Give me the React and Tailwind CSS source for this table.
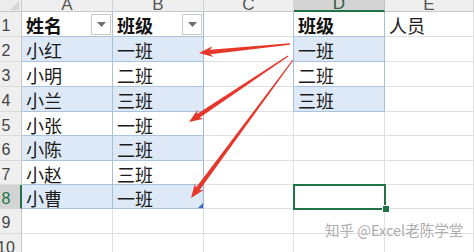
import React from 'react';

const names = ['小红', '小明', '小兰', '小张', '小陈', '小赵', '小曹'];
const classes = ['一班', '二班', '三班', '一班', '二班', '三班', '一班'];
const dList = ['一班', '二班', '三班'];
const rowH = ['h-[25px]', 'h-[25px]', 'h-[25px]', 'h-[25px]', 'h-[24px]', 'h-[25px]', 'h-[24px]', 'h-[24px]', 'h-[25px]', 'h-[25px]'];

function arrowPts(x1, y1, x2, y2, w1, w2, hl, hw) {
  const dx = x2 - x1, dy = y2 - y1, L = Math.hypot(dx, dy);
  const ux = dx / L, uy = dy / L, nx = -uy, ny = ux;
  const bx = x2 - ux * hl, by = y2 - uy * hl;
  const nb = x2 - ux * (hl * 0.8), nby = y2 - uy * (hl * 0.8);
  const p = [
    [x1 + (nx * w1) / 2, y1 + (ny * w1) / 2],
    [nb + (nx * w2) / 2, nby + (ny * w2) / 2],
    [bx + (nx * hw) / 2, by + (ny * hw) / 2],
    [x2, y2],
    [bx - (nx * hw) / 2, by - (ny * hw) / 2],
    [nb - (nx * w2) / 2, nby - (ny * w2) / 2],
    [x1 - (nx * w1) / 2, y1 - (ny * w1) / 2],
  ];
  return p.map((q) => q[0].toFixed(2) + ',' + q[1].toFixed(2)).join(' ');
}

function Dropdown() {
  return (
    <div className="absolute right-[1px] top-[2px] w-[20px] h-[21px] bg-white border border-[#c9c9c9] flex items-center justify-center">
      <svg width="9" height="5" viewBox="0 0 9 5">
        <path d="M0 0H9L4.5 5Z" fill="#6f6f6f" />
      </svg>
    </div>
  );
}

function Txt({ children, bold }) {
  return (
    <span
      className={
        bold
          ? "block pl-[4px] pt-[2px] text-[18px] leading-[22px] font-bold text-[#111] whitespace-nowrap font-['Noto_Sans_CJK_SC','Noto_Sans',sans-serif]"
          : "block pl-[4px] pt-[2px] text-[18px] leading-[22px] text-[#1a1a1a] whitespace-nowrap font-['Noto_Sans_CJK_SC','Noto_Sans',sans-serif]"
      }
    >
      {children}
    </span>
  );
}

export default function App() {
  const rows = [];
  for (let r = 1; r <= 10; r++) {
    const inTable = r <= 8;
    const blue = inTable && r % 2 === 0;
    const dTable = r <= 4;
    const dBlue = dTable && r % 2 === 0;
    const sel = r === 8;
    rows.push(
      <div key={r} className={'flex ' + rowH[r - 1]}>
        <div
          className={
            sel
              ? 'w-[22px] shrink-0 bg-[#d3d3d3] border-r-2 border-r-[#217346] border-b border-b-[#d4d4d4] overflow-hidden relative'
              : 'w-[22px] shrink-0 bg-[#efefef] border-r border-r-[#c8c8c8] border-b border-b-[#dadada] overflow-hidden relative'
          }
        >
          <span
            className={
              sel
                ? "absolute left-[-9px] w-[30px] top-0 text-center pt-[3px] text-[16px] leading-[22px] text-[#217346] font-['Liberation_Sans',Arial,sans-serif]"
                : "absolute left-[-9px] w-[30px] top-0 text-center pt-[3px] text-[16px] leading-[22px] text-[#444] font-['Liberation_Sans',Arial,sans-serif]"
            }
          >
            {r}
          </span>
        </div>
        {/* A */}
        <div
          className={
            inTable
              ? (blue ? 'bg-[#dde9f6] ' : 'bg-white ') + 'w-[91px] shrink-0 relative border-r border-b border-r-[#a9c0d9] border-b-[#aac3de]'
              : 'bg-white w-[91px] shrink-0 relative border-r border-b border-r-[#e0e0e0] border-b-[#e0e0e0]'
          }
        >
          {r === 1 && <Txt bold>姓名</Txt>}
          {r === 1 && <Dropdown />}
          {r >= 2 && r <= 8 && <Txt>{names[r - 2]}</Txt>}
        </div>
        {/* B */}
        <div
          className={
            inTable
              ? (blue ? 'bg-[#dde9f6] ' : 'bg-white ') + 'w-[91px] shrink-0 relative border-r border-b border-r-[#9fb7d1] border-b-[#aac3de]'
              : 'bg-white w-[91px] shrink-0 relative border-r border-b border-r-[#e0e0e0] border-b-[#e0e0e0]'
          }
        >
          {r === 1 && <Txt bold>班级</Txt>}
          {r === 1 && <Dropdown />}
          {r >= 2 && r <= 8 && <Txt>{classes[r - 2]}</Txt>}
          {r === 8 && (
            <svg className="absolute right-0 bottom-0" width="5" height="5" viewBox="0 0 5 5">
              <path d="M5 0V5H0Z" fill="#3d6dbf" />
            </svg>
          )}
        </div>
        {/* C */}
        <div
          className={
            dTable
              ? 'bg-white w-[90px] shrink-0 border-r border-b border-r-[#a9c0d9] border-b-[#e0e0e0]'
              : 'bg-white w-[90px] shrink-0 border-r border-b border-r-[#e0e0e0] border-b-[#e0e0e0]'
          }
        />
        {/* D */}
        <div
          className={
            dTable
              ? (dBlue ? 'bg-[#dde9f6] ' : 'bg-white ') + 'w-[91px] shrink-0 border-r border-b border-r-[#a9c0d9] border-b-[#aac3de]'
              : 'bg-white w-[91px] shrink-0 border-r border-b border-r-[#e0e0e0] border-b-[#e0e0e0]'
          }
        >
          {r === 1 && <Txt bold>班级</Txt>}
          {r >= 2 && r <= 4 && <Txt>{dList[r - 2]}</Txt>}
        </div>
        {/* E */}
        <div className="bg-white flex-1 border-b border-b-[#e0e0e0] border-r border-r-[#e0e0e0]">
          {r === 1 && <Txt>人员</Txt>}
        </div>
      </div>
    );
  }

  const headerCell = (letter, w, selected) => (
    <div
      key={letter}
      className={
        selected
          ? w + " shrink-0 h-[12px] bg-[#d4d4d4] border-r border-r-[#c4c4c4] border-b-2 border-b-[#217346] overflow-hidden flex items-end justify-center"
          : w + " shrink-0 h-[12px] bg-[#efefef] border-r border-r-[#d2d2d2] border-b border-b-[#c8c8c8] overflow-hidden flex items-end justify-center"
      }
    >
      <span
        className={
          selected
            ? "text-[17px] leading-[14px] mb-[-1px] text-[#2d5e43] font-['Liberation_Sans',Arial,sans-serif]"
            : "text-[17px] leading-[14px] mb-[-1px] text-[#555] font-['Liberation_Sans',Arial,sans-serif]"
        }
      >
        {letter}
      </span>
    </div>
  );

  return (
    <div className="relative w-[474px] h-[252px] overflow-hidden bg-white">
      <div className="flex h-[12px]">
        <div className="w-[22px] shrink-0 h-[12px] bg-[#ececec] border-r border-r-[#c8c8c8] border-b border-b-[#c8c8c8] relative overflow-hidden">
          <svg className="absolute right-[2px] bottom-[1px]" width="9" height="9" viewBox="0 0 9 9">
            <path d="M9 0V9H0Z" fill="#d6d6d6" />
          </svg>
        </div>
        {headerCell('A', 'w-[91px]', false)}
        {headerCell('B', 'w-[91px]', false)}
        {headerCell('C', 'w-[90px]', false)}
        {headerCell('D', 'w-[91px]', true)}
        {headerCell('E', 'flex-1', false)}
      </div>
      {rows}

      {/* selection */}
      <div className="absolute left-[293px] top-[184px] w-[93px] h-[26px] border-2 border-[#217346] pointer-events-none" />
      <div className="absolute left-[382px] top-[205px] w-[6px] h-[6px] bg-[#217346] border border-white box-content pointer-events-none" />

      {/* arrows */}
      <svg className="absolute left-0 top-0 pointer-events-none" width="474" height="252" viewBox="0 0 474 252">
        <polygon points={arrowPts(290, 44, 199, 53, 1.4, 4.5, 14, 11)} fill="#e5382a" />
        <polygon points={arrowPts(288, 56, 189, 122, 1.1, 4.5, 14, 11)} fill="#e5382a" />
        <polygon points={arrowPts(293, 60, 191, 198, 1.1, 4.5, 14, 11)} fill="#e5382a" />
      </svg>

      {/* watermark */}
      <div className="absolute left-[325px] top-[221px] text-[14.5px] leading-[18px] text-[#adadad] whitespace-nowrap font-['Noto_Sans_CJK_SC','Noto_Sans',sans-serif] [text-shadow:0_0_1px_#ffffff]">
        知乎 @Excel老陈学堂
      </div>
    </div>
  );
}
